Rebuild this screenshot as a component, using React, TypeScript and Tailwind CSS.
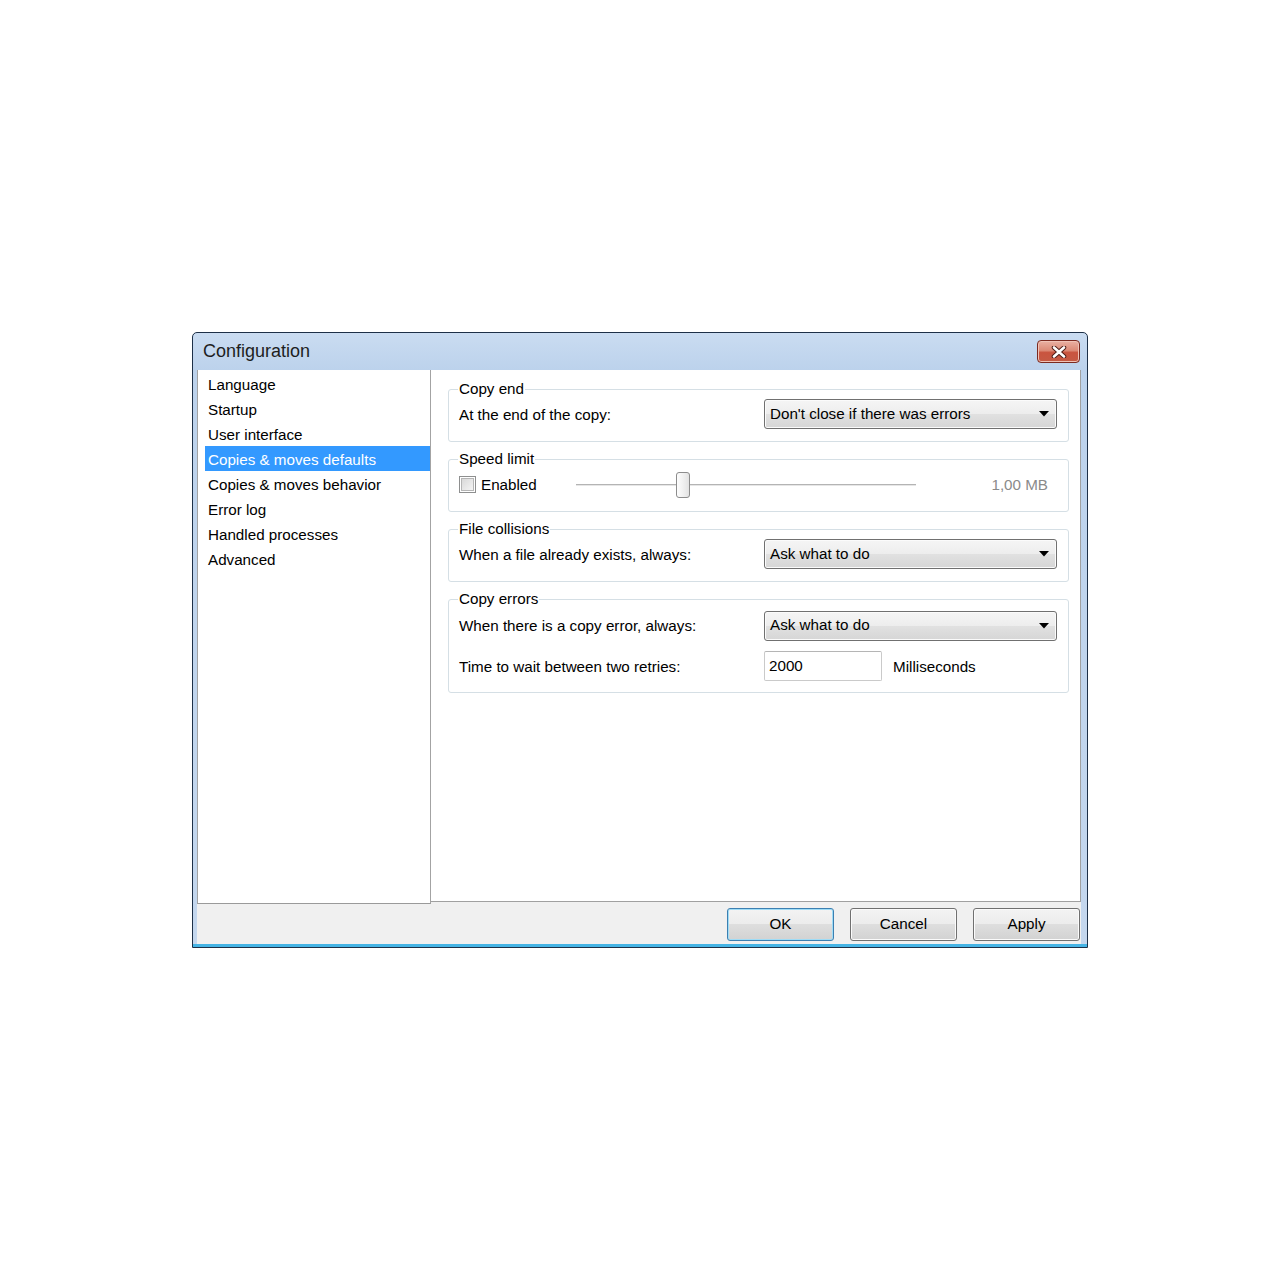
import clsx from 'clsx'

const SECTIONS = [
  'Language',
  'Startup',
  'User interface',
  'Copies & moves defaults',
  'Copies & moves behavior',
  'Error log',
  'Handled processes',
  'Advanced',
]

const SELECTED = 3

function Combo({ value }: { value: string }) {
  return (
    <div className="flex h-[30px] flex-1 items-center justify-between rounded-[3px] border border-[#707070] bg-[linear-gradient(to_bottom,#f5f5f5_0%,#ededed_50%,#e1e1e1_50%,#d6d6d6_100%)] pl-[5px] pr-[7px] shadow-[inset_0_0_0_1px_#fbfbfb]">
      <span>{value}</span>
      <svg width="10" height="6" viewBox="0 0 10 6">
        <path d="M0 0h10L5 5.5z" fill="#000" />
      </svg>
    </div>
  )
}

function GroupBox({ title, children, className }: { title: string; children: React.ReactNode; className?: string }) {
  return (
    <fieldset className={clsx('rounded-[3px] border border-[#d5dfe5] pl-[10px] pr-[11px]', className)}>
      <legend className="-ml-[1px] h-[18px] px-[1px] leading-[18px]">{title}</legend>
      {children}
    </fieldset>
  )
}

function DialogButton({ label, focused = false }: { label: string; focused?: boolean }) {
  return (
    <button
      className={clsx(
        'h-[33px] w-[107px] rounded-[3px] border bg-[linear-gradient(to_bottom,#f3f3f3_0%,#ececec_50%,#dedede_50%,#d2d2d2_100%)] text-[15.2px] text-black',
        focused
          ? 'border-[#3c7fb1] shadow-[inset_0_0_0_1px_#9fdcf6]'
          : 'border-[#707070] shadow-[inset_0_0_0_1px_#fbfbfb]',
      )}
    >
      {label}
    </button>
  )
}

export default function App() {
  return (
    <div className="flex h-[1280px] w-full items-center justify-center bg-white font-['Liberation_Sans',Arial,sans-serif] text-[15.2px] text-black">
      <div className="h-[616px] w-[896px] rounded-t-[5px] border border-[#1d3048] bg-[linear-gradient(to_bottom,#cadcf1_0%,#bcd2ec_6%,#c4d7ee_100%)]">
        <div className="flex h-full flex-col border-b-[3px] border-[#45b4e5]">
          {/* title bar */}
          <div className="flex h-[37px] shrink-0 items-center justify-between pl-[10px] pr-[7px]">
            <span className="text-[18px] text-[#1e1e1e]">Configuration</span>
            <div className="flex h-[23px] w-[43px] items-center justify-center rounded-[4px] border border-[#7b2a20] bg-[linear-gradient(to_bottom,#eab1a3_0%,#dc8a76_45%,#c9543f_55%,#c55a44_100%)] shadow-[inset_0_0_0_1px_#f0c2b6]">
              <svg width="16" height="12" viewBox="0 0 16 12">
                <path d="M3 1.5l10 9M13 1.5l-10 9" stroke="#4a1a14" strokeWidth="4.5" strokeLinecap="round" />
                <path d="M3 1.5l10 9M13 1.5l-10 9" stroke="#fff" strokeWidth="2.6" strokeLinecap="round" />
              </svg>
            </div>
          </div>

          {/* client area */}
          <div className="ml-[4px] mr-[6px] flex flex-1 flex-col bg-[#f0f0f0]">
            <div className="flex h-[534px]">
              {/* section list */}
              <div className="w-[234px] border-x border-b border-x-[#a3a3a3] border-b-[#9a9a9a] bg-white pt-[1px]">
                {SECTIONS.map((s, i) => (
                  <div
                    key={s}
                    className={clsx(
                      'ml-[7px] h-[25px] pl-[3px] leading-[27px]',
                      i === SELECTED ? 'bg-[#3399ff] text-white' : 'text-black',
                    )}
                  >
                    {s}
                  </div>
                ))}
              </div>

              {/* settings panel */}
              <div className="mb-[2px] flex flex-1 flex-col gap-[8px] border-r border-b border-[#a0a0a0] bg-white pl-[17px] pr-[11px] pt-[10px]">
                <GroupBox title="Copy end" className="pb-[12px] pt-[1px]">
                  <div className="flex h-[30px] items-center">
                    <span className="w-[305px] pt-[3px]">At the end of the copy:</span>
                    <Combo value="Don't close if there was errors" />
                  </div>
                </GroupBox>

                <GroupBox title="Speed limit" className="pb-[9px]">
                  <div className="flex h-[34px] items-center">
                    <div className="flex w-[117px] items-center gap-[5px]">
                      <span className="flex h-[17px] w-[17px] items-center justify-center border border-[#8e8f8f] bg-white">
                        <span className="h-[13px] w-[13px] border border-[#b5b5b5] bg-[linear-gradient(135deg,#d9d9d9_0%,#f4f4f4_100%)]" />
                      </span>
                      <span>Enabled</span>
                    </div>
                    <div className="relative h-[26px] w-[340px]">
                      <div className="absolute left-0 right-0 top-[12px] h-[2px] border-t border-[#b4b4b4] bg-[#e6e6e6]" />
                      <div className="absolute left-[100px] top-0 h-[26px] w-[14px] rounded-[3px] border border-[#8c8c8c] bg-[linear-gradient(to_right,#fdfdfd_0%,#eeeeee_60%,#e2e2e2_100%)]" />
                    </div>
                    <span className="flex-1 pr-[9px] text-right text-[#8a8a8a]">1,00 MB</span>
                  </div>
                </GroupBox>

                <GroupBox title="File collisions" className="pb-[12px] pt-[1px]">
                  <div className="flex h-[30px] items-center">
                    <span className="w-[305px] pt-[3px]">When a file already exists, always:</span>
                    <Combo value="Ask what to do" />
                  </div>
                </GroupBox>

                <GroupBox title="Copy errors" className="pb-[11px] pt-[3px]">
                  <div className="flex h-[29px] items-center">
                    <span className="w-[305px] pt-[2px]">When there is a copy error, always:</span>
                    <Combo value="Ask what to do" />
                  </div>
                  <div className="mt-[11px] flex h-[30px] items-center">
                    <span className="w-[305px] pt-[2px]">Time to wait between two retries:</span>
                    <div className="flex h-[30px] w-[118px] items-center rounded-[2px] border border-[#cacaca] border-t-[#b5b5b5] bg-white pl-[4px]">
                      2000
                    </div>
                    <span className="ml-[11px] pt-[2px]">Milliseconds</span>
                  </div>
                </GroupBox>
              </div>
            </div>

            {/* button row */}
            <div className="flex flex-1 items-start justify-end gap-[16px] pr-[1px] pt-[4px]">
              <DialogButton label="OK" focused />
              <DialogButton label="Cancel" />
              <DialogButton label="Apply" />
            </div>
          </div>
        </div>
      </div>
    </div>
  )
}
